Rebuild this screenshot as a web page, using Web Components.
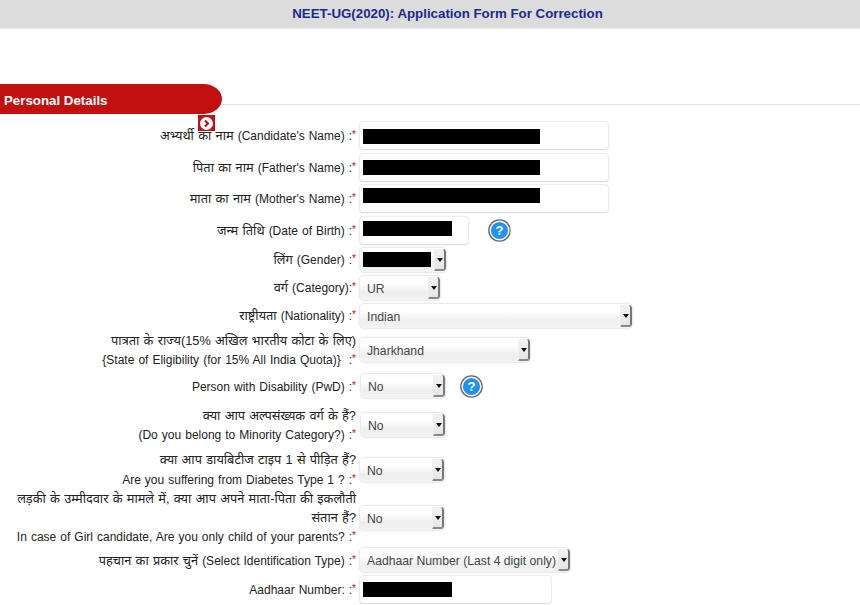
<!DOCTYPE html>
<html>
<head>
<meta charset="utf-8">
<title>NEET-UG(2020)</title>
<style>
html,body{margin:0;padding:0;background:#fff;height:605px;overflow:hidden}
body{font-family:"Liberation Sans","Noto Sans",sans-serif;font-size:12px;color:#333}
.hi{font-size:12.8px}
</style>
</head>
<body>
<neet-header>NEET-UG(2020): Application Form For Correction</neet-header>
<section-bar>Personal Details</section-bar>
<form-row h="31" style="margin-top:6px">
  <span slot="label"><span class="hi">अभ्यर्थी का नाम</span> (Candidate's Name) :</span>
  <text-field width="248" mask="177" top="7"></text-field>
</form-row>
<form-row h="33">
  <span slot="label"><span class="hi">पिता का नाम</span> (Father's Name) :</span>
  <text-field width="248" mask="177" top="6"></text-field>
</form-row>
<form-row h="29">
  <span slot="label"><span class="hi">माता का नाम</span> (Mother's Name) :</span>
  <text-field width="248" mask="177" top="3"></text-field>
</form-row>
<form-row h="34">
  <span slot="label"><span class="hi">जन्म तिथि</span> (Date of Birth) :</span>
  <text-field width="108" mask="89" top="4"></text-field>
  <help-icon style="margin-left:20px"></help-icon>
</form-row>
<form-row h="25">
  <span slot="label"><span class="hi">लिंग</span> (Gender) :</span>
  <select-box width="86" mask="68"></select-box>
</form-row>
<form-row h="31">
  <span slot="label"><span class="hi">वर्ग</span> (Category):</span>
  <select-box width="80">UR</select-box>
</form-row>
<form-row h="25">
  <span slot="label"><span class="hi">राष्ट्रीयता</span> (Nationality) :</span>
  <select-box width="272">Indian</select-box>
</form-row>
<form-row h="44">
  <span slot="label"><span class="hi">पात्रता के राज्य(15% अखिल भारतीय कोटा के लिए)</span><br>{State of Eligibility (for 15% All India Quota)}&nbsp; :</span>
  <select-box width="170">Jharkhand</select-box>
</form-row>
<form-row h="28">
  <span slot="label">Person with Disability (PwD) :</span>
  <select-box width="84" left="1">No</select-box>
  <help-icon style="margin-left:15px"></help-icon>
</form-row>
<form-row h="50">
  <span slot="label"><span class="hi">क्या आप अल्पसंख्यक वर्ग के हैं?</span><br>(Do you belong to Minority Category?) :</span>
  <select-box width="84" left="1">No</select-box>
</form-row>
<form-row h="38">
  <span slot="label"><span class="hi">क्या आप डायबिटीज टाइप 1 से पीड़ित हैं?</span><br>Are you suffering from Diabetes Type 1 ? :</span>
  <select-box width="84">No</select-box>
</form-row>
<form-row h="60">
  <span slot="label"><span class="hi">लड़की के उम्मीदवार के मामले में, क्या आप अपने माता-पिता की इकलौती<br>संतान हैं?</span><br>In case of Girl candidate, Are you only child of your parents? :</span>
  <select-box width="84">No</select-box>
</form-row>
<form-row h="24">
  <span slot="label"><span class="hi">पहचान का प्रकार चुनें</span> (Select Identification Type) :</span>
  <select-box width="210">Aadhaar Number (Last 4 digit only)</select-box>
</form-row>
<form-row h="34">
  <span slot="label">Aadhaar Number: :</span>
  <text-field width="191" mask="89" top="6"></text-field>
</form-row>

<script>
const NeetHeaderTemplate = document.createElement('template');
NeetHeaderTemplate.innerHTML = `
    <style>
        :host{
            display: block;
            height: 28px;
            line-height: 27px;
            background: #dcdcdc;
            border-bottom: 1px solid #eaeaea;
            text-align: center;
            font-size: 13.3px;
            font-weight: bold;
            color: #1d2a8c;
        }
        div{padding-left: 35px}
    </style>
    <div><slot></slot></div>
`;
class NeetHeader extends HTMLElement{
    constructor(){
        super();
        this.attachShadow({mode: 'open'});
        this.shadowRoot.append(NeetHeaderTemplate.content.cloneNode(true));
    }
}
customElements.define('neet-header', NeetHeader);

const SectionBarTemplate = document.createElement('template');
SectionBarTemplate.innerHTML = `
    <style>
        :host{
            display: block;
            position: relative;
            margin-top: 55px;
            height: 30px;
        }
        .line{
            height: 20px;
            border-bottom: 1px solid #e6e6e6;
            display: flex;
        }
        .tab{
            box-sizing: border-box;
            width: 222px;
            height: 30px;
            padding-left: 4px;
            line-height: 33px;
            background: #c20f0f;
            border-radius: 0 18px 18px 0 / 0 15px 15px 0;
            color: #fff;
            font-size: 13.3px;
            font-weight: bold;
        }
        .toggle{
            position: absolute;
            left: 198px;
            top: 31px;
            width: 17px;
            height: 16px;
        }
    </style>
    <div class="line"><div class="tab"><slot></slot></div></div>
    <svg class="toggle" viewBox="0 0 17 16">
        <rect width="17" height="16" fill="#c20f0f"/>
        <circle cx="8.5" cy="8.5" r="6.5" fill="#fff"/>
        <path d="M7 5.5 L10 8.5 L7 11.5" fill="none" stroke="#a01010" stroke-width="2"/>
    </svg>
`;
class SectionBar extends HTMLElement{
    constructor(){
        super();
        this.attachShadow({mode: 'open'});
        this.shadowRoot.append(SectionBarTemplate.content.cloneNode(true));
    }
}
customElements.define('section-bar', SectionBar);

const FormRowTemplate = document.createElement('template');
FormRowTemplate.innerHTML = `
    <style>
        :host{
            display: grid;
            grid-template-columns: 360px 1fr;
            align-items: center;
        }
        .label{
            text-align: right;
            font-size: 12px;
            line-height: 18.5px;
            color: #222;
            font-family: "Liberation Sans", "Noto Sans", "DejaVu Sans", sans-serif;
            word-spacing: .7px;
            padding: 1px 4px 0 0;
        }
        .req{
            color: #e00000;
            font-size: 10px;
            vertical-align: 2px;
        }
        .ctrl{
            display: flex;
            align-items: center;
        }
    </style>
    <div class="label"><slot name="label"></slot><span class="req">*</span></div>
    <div class="ctrl"><slot></slot></div>
`;
class FormRow extends HTMLElement{
    constructor(){
        super();
        this.attachShadow({mode: 'open'});
        this.shadowRoot.append(FormRowTemplate.content.cloneNode(true));
    }
    connectedCallback(){
        this.style.height = this.getAttribute('h') + 'px';
    }
}
customElements.define('form-row', FormRow);

const TextFieldTemplate = document.createElement('template');
TextFieldTemplate.innerHTML = `
    <style>
        :host{
            display: flex;
            align-items: flex-start;
            box-sizing: border-box;
            height: 27px;
            padding-left: 3px;
            background: #fff;
            border-radius: 3px;
            box-shadow: 0 0 2px rgba(0,0,0,.28), 0 1px 1px rgba(0,0,0,.08);
        }
        .mask{height: 15px; background: #000}
    </style>
    <div class="mask"></div>
`;
class TextField extends HTMLElement{
    constructor(){
        super();
        this.attachShadow({mode: 'open'});
        this.shadowRoot.append(TextFieldTemplate.content.cloneNode(true));
    }
    connectedCallback(){
        this.style.width = this.getAttribute('width') + 'px';
        const mask = this.shadowRoot.querySelector('.mask');
        mask.style.width = this.getAttribute('mask') + 'px';
        mask.style.marginTop = this.getAttribute('top') + 'px';
    }
}
customElements.define('text-field', TextField);

const SelectBoxTemplate = document.createElement('template');
SelectBoxTemplate.innerHTML = `
    <style>
        :host{
            display: flex;
            align-items: stretch;
            box-sizing: border-box;
            height: 24px;
            background: linear-gradient(#fff 0, #fff 30%, #eee 70%, #f4f4f4 100%);
            border-radius: 4px;
            box-shadow: 0 0 2px rgba(0,0,0,.3);
            font-size: 12.2px;
            color: #444;
            overflow: hidden;
        }
        .value{
            flex: 1;
            padding-left: 7px;
            line-height: 26px;
            white-space: nowrap;
            min-width: 0;
        }
        .mask{
            display: none;
            width: 68px;
            height: 15px;
            background: #000;
            margin: 4px 0 0 3px;
        }
        .arrow{
            position: relative;
            flex: none;
            width: 9px;
            height: 20px;
            margin-top: 1px;
            background: linear-gradient(#f2f2f2, #e6e6e6);
            border-right: 2px solid #777;
            border-bottom: 2px solid #888;
            border-left: 1px solid #eee;
            border-radius: 0 3px 3px 0;
        }
        .arrow::after{
            content: "";
            position: absolute;
            left: 2px;
            top: 9px;
            border: 3px solid transparent;
            border-top: 4px solid #111;
            border-bottom: 0;
        }
    </style>
    <div class="mask"></div>
    <div class="value"><slot></slot></div>
    <div class="arrow"></div>
`;
class SelectBox extends HTMLElement{
    constructor(){
        super();
        this.attachShadow({mode: 'open'});
        this.shadowRoot.append(SelectBoxTemplate.content.cloneNode(true));
    }
    connectedCallback(){
        this.style.width = this.getAttribute('width') + 'px';
        if(this.hasAttribute('left')) this.style.marginLeft = this.getAttribute('left') + 'px';
        if(this.hasAttribute('mask')){
            this.shadowRoot.querySelector('.mask').style.display = 'block';
            this.shadowRoot.querySelector('.mask').style.width = this.getAttribute('mask') + 'px';
            this.shadowRoot.querySelector('.value').style.display = 'none';
            this.shadowRoot.querySelector('.arrow').style.marginLeft = 'auto';
        }
    }
}
customElements.define('select-box', SelectBox);

const HelpIconTemplate = document.createElement('template');
HelpIconTemplate.innerHTML = `
    <style>
        :host{display: inline-flex; width: 23px; height: 23px}
    </style>
    <svg width="23" height="23" viewBox="0 0 23 23">
        <circle cx="11.5" cy="11.5" r="10.7" fill="#fff" stroke="#666" stroke-width="1.3"/>
        <circle cx="11.5" cy="11.5" r="8.6" fill="#1f93f2"/>
        <text x="11.5" y="16" text-anchor="middle" font-family="Liberation Sans" font-weight="bold" font-size="13" fill="#fff">?</text>
    </svg>
`;
class HelpIcon extends HTMLElement{
    constructor(){
        super();
        this.attachShadow({mode: 'open'});
        this.shadowRoot.append(HelpIconTemplate.content.cloneNode(true));
    }
}
customElements.define('help-icon', HelpIcon);
</script>
</body>
</html>
